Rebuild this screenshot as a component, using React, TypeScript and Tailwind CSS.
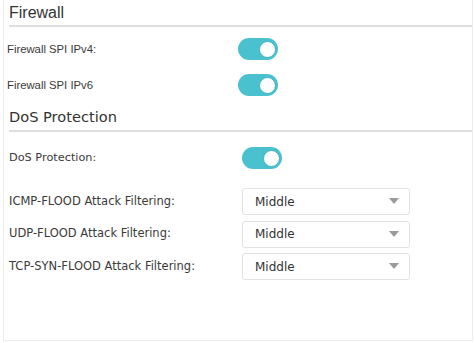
import React from "react";

const Toggle = () => (
  <div className="w-[40px] h-[22px] rounded-full bg-[#4ac1ce] flex items-center justify-end pr-[2.5px]">
    <div className="w-[17px] h-[17px] rounded-full bg-white border border-[#3fb3c0]" />
  </div>
);

const Select = () => (
  <div className="w-[168px] h-[27px] rounded-[3px] border border-[#e2e2e2] bg-white flex items-center justify-between pl-[12px] pr-[10px]">
    <span className="text-[12px] text-[#333] leading-none" style={{ fontFamily: '"DejaVu Sans", sans-serif' }}>Middle</span>
    <svg width="10" height="7" viewBox="0 0 10 7"><polygon points="0,0 10,0 5,6" fill="#9a9a9a" /></svg>
  </div>
);

export default function App() {
  const dv = { fontFamily: '"DejaVu Sans", sans-serif' };
  const ar = { fontFamily: '"Liberation Sans", Arial, sans-serif' };
  return (
    <div className="w-[474px] h-[343px] bg-white overflow-hidden">
      <div className="ml-[3px] mr-[1px] h-[341px] border-l border-r border-b border-[#ececec] flex flex-col">
        <div className="h-[25px] flex items-center pl-[5px] text-[16px] text-[#333]" style={ar}>Firewall</div>
        <div className="ml-[5px] h-[2px] bg-[#dedede]" />
        <div className="h-[4px]" />
        <div className="h-[36px] flex items-center">
          <div className="w-[234px] pl-[3px] text-[11.3px] text-[#3a3a3a]" style={ar}>Firewall SPI IPv4:</div>
          <Toggle />
        </div>
        <div className="h-[36px] flex items-center">
          <div className="w-[234px] pl-[3px] text-[11.3px] text-[#3a3a3a]" style={ar}>Firewall SPI IPv6</div>
          <Toggle />
        </div>
        <div className="h-[27px] flex items-center pl-[5px] text-[14.6px] text-[#333]" style={dv}>DoS Protection</div>
        <div className="ml-[5px] h-[2px] bg-[#dedede]" />
        <div className="h-[8px]" />
        <div className="h-[36px] flex items-center">
          <div className="w-[238px] pl-[5px] text-[11.3px] text-[#3a3a3a]" style={dv}>DoS Protection:</div>
          <Toggle />
        </div>
        <div className="h-[12px]" />
        <div className="flex flex-col gap-[5.5px]">
          {["ICMP-FLOOD Attack Filtering:", "UDP-FLOOD Attack Filtering:", "TCP-SYN-FLOOD Attack Filtering:"].map((t) => (
            <div key={t} className="h-[27px] flex items-center">
              <div className="w-[238px] pl-[5px] text-[11.5px] text-[#3a3a3a]" style={dv}>{t}</div>
              <Select />
            </div>
          ))}
        </div>
      </div>
    </div>
  );
}
